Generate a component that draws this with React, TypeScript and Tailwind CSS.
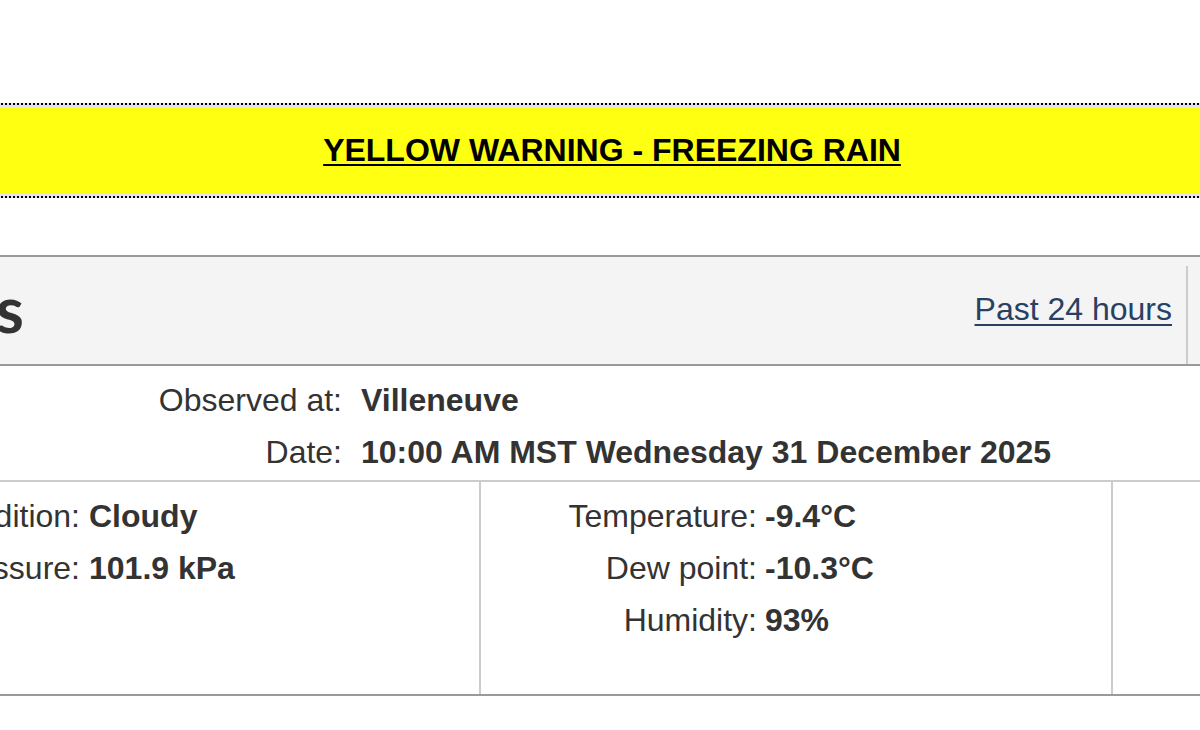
import React from "react";

function Row({ label, value, labelW, gap }: { label: string; value: string; labelW: string; gap: string }) {
  return (
    <div className="flex leading-[52px] whitespace-nowrap">
      <div className={`${labelW} shrink-0 flex justify-end`}>
        <span>{label}</span>
      </div>
      <div className={`${gap} font-bold`}>{value}</div>
    </div>
  );
}

export default function App() {
  return (
    <div className="w-[1200px] h-[730px] overflow-hidden bg-white font-['Liberation_Sans',Arial,sans-serif] text-[32px] text-[#333]">
      <div className="pt-[103px]">
        <div className="ml-[-38px] w-[1300px] border-y-2 border-dotted border-black bg-[#e4e4f0] py-[2px]">
          <div className="h-[87px] bg-[#ffff12] flex items-center justify-center pb-[2px]">
            <a href="#" className="font-bold text-black underline decoration-2 underline-offset-[3px] leading-none">
              YELLOW WARNING - FREEZING RAIN
            </a>
          </div>
        </div>
      </div>

      <div className="mt-[57px] flex h-[111px] border-y-2 border-[#999] bg-[#f4f4f4]">
        <div className="w-[24px] shrink-0 flex justify-end items-center pb-[3px]">
          <h2 className="whitespace-nowrap font-['Lato',sans-serif] font-bold text-[64px] leading-none text-[#333]">
            Current Conditions
          </h2>
        </div>
        <div className="flex-1 flex justify-end items-center pr-[14px] pb-[4px]">
          <a href="#" className="text-[#284162] underline decoration-2 underline-offset-[4px] whitespace-nowrap">
            Past 24 hours
          </a>
        </div>
        <div className="w-[14px] shrink-0 mt-[9px] border-l-2 border-[#ccc]"></div>
      </div>

      <div className="pt-[8px] pb-[2px]">
        <Row label="Observed at:" value="Villeneuve" labelW="w-[342px]" gap="pl-[19px]" />
        <Row label="Date:" value="10:00 AM MST Wednesday 31 December 2025" labelW="w-[342px]" gap="pl-[19px]" />
      </div>

      <div className="flex h-[216px] border-t-2 border-t-[#ccc] border-b-2 border-b-[#999]">
        <div className="w-[481px] shrink-0 border-r-2 border-[#ccc] pt-[8px]">
          <Row label="Condition:" value="Cloudy" labelW="w-[80px]" gap="pl-[9px]" />
          <Row label="Pressure:" value="101.9 kPa" labelW="w-[80px]" gap="pl-[9px]" />
        </div>
        <div className="w-[632px] shrink-0 border-r-2 border-[#ccc] pt-[8px]">
          <Row label="Temperature:" value="-9.4°C" labelW="w-[276px]" gap="pl-[8px]" />
          <Row label="Dew point:" value="-10.3°C" labelW="w-[276px]" gap="pl-[8px]" />
          <Row label="Humidity:" value="93%" labelW="w-[276px]" gap="pl-[8px]" />
        </div>
        <div className="flex-1"></div>
      </div>
    </div>
  );
}
